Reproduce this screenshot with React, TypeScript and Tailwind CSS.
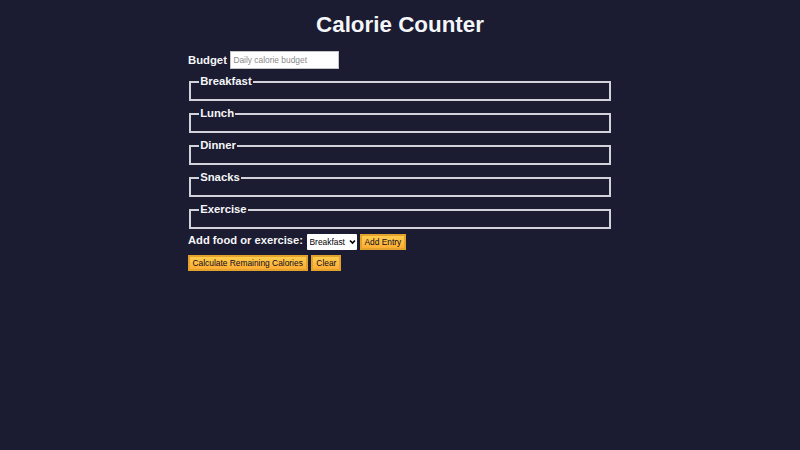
import { useState } from 'react';

const meals = ['Breakfast', 'Lunch', 'Dinner', 'Snacks', 'Exercise'];

function Btn({ children }: { children: React.ReactNode }) {
  return (
    <button
      type="button"
      className="h-[16px] px-[3px] border-2 border-[#e3a12e] bg-gradient-to-b from-[#fecc4c] to-[#ffac33] text-[8.4px] leading-[10px] text-[#0a0a23] cursor-pointer"
    >
      {children}
    </button>
  );
}

export default function App() {
  const [budget, setBudget] = useState('');
  const [entry, setEntry] = useState('breakfast');

  return (
    <div className="min-h-screen w-full bg-[#1b1b32] text-[#f5f6f7] pt-[12px] font-['Liberation_Sans',Arial,sans-serif]">
      <h1 className="h-[26px] text-center text-[22.4px] leading-[26px] font-bold">Calorie Counter</h1>

      <form className="w-[424px] mx-auto mt-[13px]" onSubmit={(e) => e.preventDefault()}>
        {/* Budget */}
        <div className="flex items-center h-[18px] gap-[3.5px]">
          <label htmlFor="budget" className="text-[11.3px] leading-[13px] font-bold">
            Budget
          </label>
          <input
            id="budget"
            type="number"
            value={budget}
            onChange={(e) => setBudget(e.target.value)}
            placeholder="Daily calorie budget"
            className="w-[109px] h-[18px] bg-white border border-[#c4c4c4] px-[2px] text-[8.4px] text-black placeholder:text-[#8a8a8a] outline-none"
          />
        </div>

        {/* Meal sections */}
        {meals.map((m) => (
          <fieldset
            key={m}
            className="mx-[1.4px] mt-[6px] border-2 border-[#d2d2da] px-[7.4px] pt-[4px] pb-[7px]"
          >
            <legend className="px-[1.4px] text-[11.3px] leading-[13px] font-bold">{m}</legend>
            <div />
          </fieldset>
        ))}

        {/* Controls */}
        <div className="flex items-center h-[16px] mt-[4.5px]">
          <label htmlFor="entry-dropdown" className="text-[11.2px] leading-[13px] font-bold pb-[3px] mr-[3.5px]">
            Add food or exercise:
          </label>
          <div className="flex items-center h-[16px] w-[50px] bg-white rounded-[1px] mr-[3px]">
            <select
              id="entry-dropdown"
              value={entry}
              onChange={(e) => setEntry(e.target.value)}
              className="[-webkit-appearance:none] appearance-none h-[16px] w-[41px] p-0 pl-[3px] bg-transparent border-0 text-[8.4px] leading-[16px] text-black outline-none"
            >
              <option value="breakfast">Breakfast</option>
              <option value="lunch">Lunch</option>
              <option value="dinner">Dinner</option>
              <option value="snacks">Snacks</option>
              <option value="exercise">Exercise</option>
            </select>
            <svg className="pointer-events-none ml-[1px]" width="7" height="6" viewBox="0 0 7 6">
              <path d="M1 1.5 L3.5 4 L6 1.5" fill="none" stroke="#000" strokeWidth="1.6" />
            </svg>
          </div>
          <Btn>Add Entry</Btn>
        </div>

        <div className="flex gap-[3.5px] mt-[5px] -ml-[0.5px]">
          <Btn>Calculate Remaining Calories</Btn>
          <Btn>Clear</Btn>
        </div>
      </form>
    </div>
  );
}
